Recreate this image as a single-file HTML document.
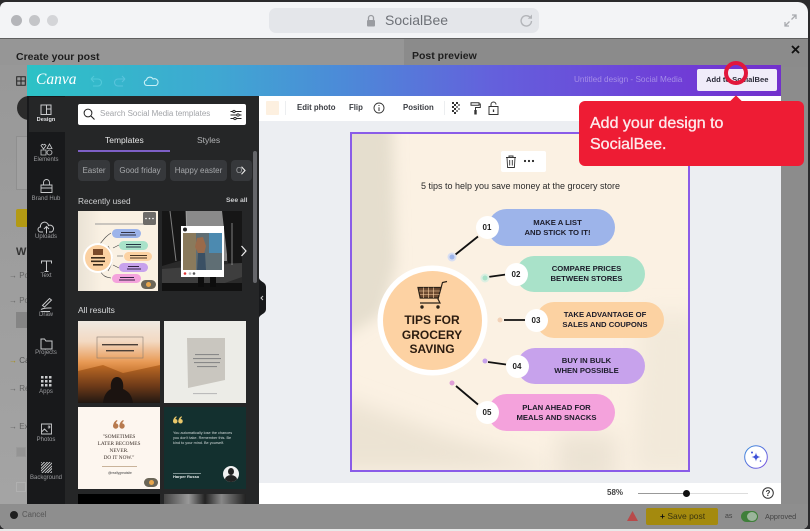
<!DOCTYPE html>
<html><head><meta charset="utf-8"><style>
html,body{margin:0;padding:0}
body{width:810px;height:531px;overflow:hidden;position:relative;background:#2a2a2c;font-family:"Liberation Sans",sans-serif}
div,span,svg{position:absolute;box-sizing:border-box}
.t{white-space:nowrap;line-height:1}
.rl{left:27px;width:38px;text-align:center;font-size:6px;color:#9c9da0;white-space:nowrap;line-height:1}
.chip{top:160px;height:21px;background:#36383b;border-radius:4px;color:#a6a8ab;font-size:8px;line-height:21px;text-align:center;white-space:nowrap;overflow:hidden}
.pill{color:#1c1c2a;font-weight:bold;font-size:7.7px;line-height:10px;text-align:center;white-space:nowrap}
.c{width:23px;height:23px;border-radius:50%;background:#fff;color:#222;font-size:8px;font-weight:bold;line-height:23px;text-align:center}
</style></head><body>
<div style="left:0;top:0;width:810px;height:531px;filter:blur(.3px)">
<!-- browser chrome -->
<div style="left:0;top:2px;width:808px;height:527px;background:#f3f4f6;border-radius:6px 10px 6px 6px;overflow:hidden">
<div style="left:0;top:36px;width:808px;height:491px;background:#969696;border-top:1px solid #5f5f5f"></div>
<div style="left:0;top:63px;width:27px;height:439px;background:linear-gradient(180deg,#989898,#a4a4a4)"></div>
<div style="left:404px;top:37px;width:404px;height:28px;background:#8b8b8b"></div>
<div style="left:781px;top:65px;width:27px;height:437px;background:#8c8c8c"></div>
<div style="left:0;top:502px;width:808px;height:25px;background:#8e8e8e"></div>
</div>
<div style="left:0;top:529px;width:810px;height:2px;background:#e9e9e9"></div>
<div style="left:11px;top:15px;width:11px;height:11px;border-radius:50%;background:#b4b5b9"></div>
<div style="left:29px;top:15px;width:11px;height:11px;border-radius:50%;background:#c4c5c8"></div>
<div style="left:47px;top:15px;width:11px;height:11px;border-radius:50%;background:#d4d5d8"></div>
<div style="left:269px;top:8px;width:270px;height:25px;border-radius:7px;background:#e4e6ea"></div>
<svg style="left:365px;top:14px" width="12" height="13" viewBox="0 0 12 13"><path d="M3.5 6V4a2.5 2.5 0 0 1 5 0v2" fill="none" stroke="#9a9ca1" stroke-width="1.3"/><rect x="2" y="6" width="8" height="6.5" rx="1" fill="#9a9ca1"/></svg>
<div class="t" style="left:385px;top:13px;font-size:14px;color:#6e7177">SocialBee</div>
<svg style="left:519px;top:13px" width="15" height="15" viewBox="0 0 15 15"><path d="M12.5 8a5.2 5.2 0 1 1-1.6-3.9" fill="none" stroke="#b3b5b9" stroke-width="1.4"/><path d="M13 1.5v4.2H8.8z" fill="#b3b5b9"/></svg>
<svg style="left:784px;top:14px" width="13" height="13" viewBox="0 0 13 13"><path d="M7.5 5.5 12 1M8 1h4v4M5.5 7.5 1 12M5 12H1V8" fill="none" stroke="#a9abaf" stroke-width="1.3"/></svg>

<!-- page behind -->
<div class="t" style="left:16px;top:52px;font-size:10.5px;font-weight:bold;color:#1e1e1e">Create your post</div>
<div class="t" style="left:412px;top:51px;font-size:10.5px;font-weight:bold;color:#1e1e1e">Post preview</div>
<svg style="left:791px;top:45px" width="9" height="9" viewBox="0 0 9 9"><path d="M1 1l7 7M8 1l-7 7" stroke="#111" stroke-width="1.8"/></svg>
<svg style="left:16px;top:76px" width="10" height="10" viewBox="0 0 10 10"><path d="M.7.7h8.6v8.6H.7zM5 .7v8.6M.7 5h8.6" fill="none" stroke="#222" stroke-width="1"/></svg>
<div style="left:17px;top:96px;width:24px;height:24px;border-radius:50%;background:#2b2b2b"></div>
<div style="left:16px;top:136px;width:20px;height:54px;border:1px solid #8f8f8f;background:#a0a0a0"></div>
<div style="left:16px;top:209px;width:20px;height:18px;background:#b39a14;border-radius:2px"></div>
<div class="t" style="left:16px;top:247px;font-size:11px;font-weight:bold;color:#333">Wh</div>
<div class="t" style="left:9px;top:272px;font-size:8px;color:#666">→ Po</div>
<div class="t" style="left:9px;top:297px;font-size:8px;color:#666">→ Po</div>
<div style="left:16px;top:312px;width:14px;height:16px;background:#858585"></div>
<div class="t" style="left:9px;top:357px;font-size:8px;color:#555"><span style="position:static;color:#a9911a">→</span> Ca</div>
<div class="t" style="left:9px;top:385px;font-size:8px;color:#666">→ Re</div>
<div class="t" style="left:9px;top:423px;font-size:8px;color:#666">→ Ex</div>
<div style="left:16px;top:447px;width:10px;height:10px;background:#949494;border:1px solid #9a9a9a"></div>
<div style="left:16px;top:482px;width:10px;height:10px;border:1px solid #b0b0b0"></div>
<!-- bottom -->
<div style="left:10px;top:511px;width:8px;height:8px;border-radius:50%;background:#1f1f1f"></div>
<div class="t" style="left:22px;top:511px;font-size:7.8px;color:#555">Cancel</div>
<svg style="left:627px;top:511px" width="11" height="10" viewBox="0 0 11 10"><path d="M5.5 0 11 10H0z" fill="#b84a4a"/></svg>
<div style="left:646px;top:508px;width:72px;height:17px;background:#a48a0e;border-radius:2px"></div>
<div class="t" style="left:660px;top:512px;font-size:8.5px;color:#3a3410"><b style="color:#111">+</b> Save post</div>
<div class="t" style="left:725px;top:513px;font-size:7px;color:#444">as</div>
<div style="left:741px;top:511px;width:17px;height:11px;border-radius:6px;background:#3f7f3a"></div>
<div style="left:747px;top:512px;width:10px;height:9px;border-radius:50%;background:#9bb59b"></div>
<div class="t" style="left:765px;top:513px;font-size:7.3px;color:#444">Approved</div>

<!-- canva -->
<div style="left:27px;top:65px;width:754px;height:31px;background:linear-gradient(90deg,#2cc2c6 0%,#3fa8d2 25%,#4c8ad8 42%,#6460dc 62%,#6f3fd8 85%,#7230cc 100%)"></div>
<div class="t" style="left:36px;top:72px;font-family:'Liberation Serif',serif;font-style:italic;font-size:15.5px;color:#fff">Canva</div>
<svg style="left:88px;top:74px" width="75" height="14" viewBox="0 0 75 14"><path d="M3 5h7a3.5 3.5 0 0 1 0 7H5M3 5l3-3M3 5l3 3" fill="none" stroke="#5fd0e0" stroke-width="1.1" opacity=".7"/><path d="M37 5h-7a3.5 3.5 0 0 0 0 7h5M37 5l-3-3M37 5l-3 3" fill="none" stroke="#6fcbe6" stroke-width="1.1" opacity=".6"/><path d="M59 11.500a2.8 2.8 0 0 1-.5-5.500 3.5 3.5 0 0 1 6.500-1 3.2 3.2 0 0 1 3 6.500z" fill="none" stroke="#c8f0f6" stroke-width="1.1"/></svg>
<div class="t" style="left:574px;top:76px;font-size:8.2px;color:#a58de8">Untitled design - Social Media</div>
<div style="left:697px;top:69px;width:80px;height:22px;background:#f0ecf9;border-radius:2px"></div>
<div class="t" style="left:706px;top:76px;font-size:7.6px;font-weight:bold;color:#2a2a38">Add to SocialBee</div>

<div style="left:27px;top:96px;width:38px;height:408px;background:#18191b"></div>
<div style="left:29px;top:97px;width:36px;height:35px;background:#252627"></div>
<div style="left:65px;top:96px;width:194px;height:408px;background:#252627"></div>
<div style="left:259px;top:96px;width:522px;height:408px;background:#eceef2"></div>
<div style="left:259px;top:96px;width:522px;height:25px;background:#fff"></div>
<div style="left:259px;top:483px;width:522px;height:21px;background:#fff"></div>

<!-- rail icons -->
<svg style="left:27px;top:96px" width="38" height="400" viewBox="0 0 38 400" fill="none" stroke="#c9cacc" stroke-width="1">
<path d="M14 9h10v9.500H14zM19.500 9v9.500M19.500 13H24"/>
<path d="M14 49.500l1.200-1.200 1.300.7 1.300-.7 1.200 1.200-2.500 3.500zM22.500 48l2.500 4.500h-5zM14 54h5v5h-5z" stroke-width=".8"/><circle cx="22.500" cy="56.500" r="2.500" stroke-width=".8"/>
<path d="M14 89h11v7.500H14zM16.500 89v-2.500a3 3 0 0 1 6 0V89M14 92h11" stroke-width=".9"/>
<path d="M16 136h-2.500a2.500 2.500 0 0 1 0-5 4 4 0 0 1 8-1.500 3.200 3.200 0 0 1 3 6.500H22M19.500 130.500v7M17 133l2.500-2.500L22 133"/>
<path d="M14.500 167.500v-2.500h10v2.500M19.500 165v10.500M17.500 175.500h4"/>
<path d="M14 213.500c3-2 7-1.500 10.500-1.500M15.500 209.500l7-7 2 1.500-7 7zM14 215.500h9"/>
<path d="M14 243v10h11v-8h-6l-1.500-2z"/>
<path d="M14.500 328h10v10h-10zM14.500 336l3-3 3 3M21 330.500a1 1 0 1 1 0 1" stroke-width=".9"/>
</svg>
<svg style="left:41px;top:376px" width="11" height="11" viewBox="0 0 11 11" fill="#c9cacc"><rect x="0" y="0" width="2.500" height="2.500"/><rect x="4" y="0" width="2.500" height="2.500"/><rect x="8" y="0" width="2.500" height="2.500"/><rect x="0" y="4" width="2.500" height="2.500"/><rect x="4" y="4" width="2.500" height="2.500"/><rect x="8" y="4" width="2.500" height="2.500"/><rect x="0" y="8" width="2.500" height="2.500"/><rect x="4" y="8" width="2.500" height="2.500"/><rect x="8" y="8" width="2.500" height="2.500"/></svg>
<div style="left:41px;top:462px;width:11px;height:11px;background:repeating-linear-gradient(135deg,#b8b9bb 0 1px,#18191b 1px 2px)"></div>
<div class="rl" style="top:118px;color:#e2e3e5;font-weight:bold;font-size:5.6px">Design</div>
<div class="rl" style="top:157px">Elements</div>
<div class="rl" style="top:196px">Brand Hub</div>
<div class="rl" style="top:234px">Uploads</div>
<div class="rl" style="top:273px">Text</div>
<div class="rl" style="top:312px">Draw</div>
<div class="rl" style="top:350px">Projects</div>
<div class="rl" style="top:389px">Apps</div>
<div class="rl" style="top:437px">Photos</div>
<div class="rl" style="top:475px">Background</div>

<!-- panel -->
<div style="left:78px;top:104px;width:168px;height:21px;background:#fff;border-radius:2px"></div>
<svg style="left:83px;top:108px" width="12" height="12" viewBox="0 0 12 12"><circle cx="5" cy="5" r="3.900" fill="none" stroke="#222" stroke-width="1"/><path d="M8 8l3.500 3.500" stroke="#222" stroke-width="1.100"/></svg>
<div class="t" style="left:100px;top:110px;font-size:8px;color:#a2a4a8">Search Social Media templates</div>
<svg style="left:230px;top:109px" width="12" height="12" viewBox="0 0 12 12" fill="none" stroke="#222" stroke-width=".9"><path d="M.5 2.500h11M.5 6h11M.5 9.500h11"/><circle cx="4" cy="2.500" r="1.200" fill="#fff"/><circle cx="8" cy="6" r="1.200" fill="#fff"/><circle cx="5" cy="9.500" r="1.200" fill="#fff"/></svg>
<div class="t" style="left:105px;top:136px;font-size:8.5px;color:#e6e6e7">Templates</div>
<div class="t" style="left:197px;top:136px;font-size:8.5px;color:#b4b5b7">Styles</div>
<div style="left:78px;top:150px;width:92px;height:1.500px;background:#7d5fc6"></div>
<div class="chip" style="left:78px;width:32px">Easter</div>
<div class="chip" style="left:114px;width:52px">Good friday</div>
<div class="chip" style="left:170px;width:57px">Happy easter</div>
<div class="chip" style="left:231px;width:21px;text-align:left;padding-left:5px">O</div>
<svg style="left:240px;top:166px" width="7" height="9" viewBox="0 0 7 9"><path d="M1.500 .8 5 4.500 1.500 8.200" fill="none" stroke="#eee" stroke-width="1.100"/></svg>
<div style="left:253px;top:151px;width:4px;height:132px;background:#65666a;border-radius:2px"></div>
<div class="t" style="left:78px;top:197px;font-size:8.3px;color:#cfd0d2">Recently used</div>
<div class="t" style="left:226px;top:198px;font-size:6.8px;color:#c9cacc;font-weight:bold">See all</div>

<!-- thumb 1 -->
<svg style="left:78px;top:211px" width="80" height="80" viewBox="0 0 80 80">
<defs><linearGradient id="tb" x1="0" x2="1"><stop offset="0" stop-color="#e9e2d5"/><stop offset=".3" stop-color="#faf1e3"/></linearGradient></defs>
<rect width="80" height="80" fill="url(#tb)"/>
<rect x="17" y="12.500" width="48" height="1" fill="#999"/>
<path d="M22 33C26 28 28 25 33 22M35 37 41 34M39 45h6M35 54l6 3M22 60C26 66 28 66 33 67M30 35C36 45 36 50 30 60" stroke="#444" stroke-width=".6" fill="none"/>
<circle cx="20" cy="47" r="15" fill="#fff"/><circle cx="20" cy="47" r="13" fill="#fbd1a2"/>
<rect x="15" y="38" width="10" height="6" fill="#7a4a2a"/><rect x="13" y="46" width="14" height="1.600" fill="#3a2a1a"/><rect x="13" y="49.500" width="14" height="1.600" fill="#3a2a1a"/><rect x="15" y="53" width="10" height="1.600" fill="#3a2a1a"/>
<rect x="34" y="18" width="29" height="9" rx="4.500" fill="#9db4ea"/><rect x="43" y="21" width="14" height="1" fill="#334"/><rect x="42" y="23.500" width="16" height="1" fill="#334"/>
<rect x="41" y="30" width="29" height="9" rx="4.500" fill="#a9e2c9"/><rect x="48" y="33" width="15" height="1" fill="#234"/><rect x="48" y="35.500" width="15" height="1" fill="#234"/>
<rect x="46" y="41" width="28" height="9" rx="4.500" fill="#fcd2a2"/><rect x="52" y="44" width="17" height="1" fill="#432"/><rect x="52" y="46.500" width="17" height="1" fill="#432"/>
<rect x="41" y="52" width="29" height="9" rx="4.500" fill="#c7a2ec"/><rect x="50" y="55" width="11" height="1" fill="#324"/><rect x="49" y="57.500" width="14" height="1" fill="#324"/>
<rect x="34" y="63" width="29" height="9" rx="4.500" fill="#f4a2dc"/><rect x="42" y="66" width="14" height="1" fill="#324"/><rect x="41" y="68.500" width="16" height="1" fill="#324"/>
<rect x="65" y="1" width="13" height="13" rx="1.500" fill="#6d6b68"/><circle cx="68" cy="7.500" r=".8" fill="#fff"/><circle cx="71.500" cy="7.500" r=".8" fill="#fff"/><circle cx="75" cy="7.500" r=".8" fill="#fff"/>
<rect x="63" y="69" width="15" height="9" rx="4.500" fill="#6b6658"/><circle cx="70.500" cy="73.500" r="2.500" fill="#e8a64c"/>
</svg>
<!-- thumb 2 -->
<svg style="left:162px;top:211px" width="80" height="80" viewBox="0 0 80 80">
<rect width="80" height="80" fill="#2a2a2a"/>
<path d="M20 0h45v50H20z" fill="#8a8a8a"/>
<path d="M0 0h24v48L0 55zM60 0h20v52H66z" fill="#161616"/>
<path d="M0 58 80 52v14L40 80H0z" fill="#3e3e3e"/>
<path d="M0 72h80v8H0z" fill="#111"/>
<path d="M24 0l2 50M8 0l6 50M70 12v42" stroke="#aaa" stroke-width="1" opacity=".7"/>
<rect x="19" y="15" width="43" height="51" fill="#fff"/>
<rect x="21" y="22" width="39" height="37" fill="#5f6e74"/><rect x="21" y="22" width="13" height="37" fill="#8a7a5c"/><rect x="47" y="22" width="13" height="20" fill="#4c8ab0"/>
<path d="M35 27l6-1 3 9-2 8 1 16h-8l1-17-3-6z" fill="#9a6a4a"/><path d="M36 42h7l1 17h-9z" fill="#3a5064"/>
<circle cx="23" cy="18.500" r="2" fill="#222"/><circle cx="23" cy="62.500" r="1.300" fill="#d33"/><circle cx="28" cy="62.500" r="1.300" fill="#bbb"/><circle cx="32" cy="62.500" r="1.300" fill="#555"/>
<rect x="36" y="66" width="6" height="10" fill="#0d0d0d"/><rect x="48" y="66" width="6" height="10" fill="#0d0d0d"/>
</svg>
<svg style="left:240px;top:245px" width="8" height="12" viewBox="0 0 8 12"><path d="M1.500 1 6 6 1.500 11" fill="none" stroke="#eee" stroke-width="1.200"/></svg>
<svg style="left:259px;top:278px" width="9" height="40" viewBox="0 0 9 40"><path d="M0 0c1 4 7 4 7 9v22c0 5-6 5-7 9z" fill="#18191b"/><path d="M4 18l-2 2 2 2" stroke="#ccc" fill="none"/></svg>

<div class="t" style="left:78px;top:306px;font-size:8.5px;color:#d8d9db">All results</div>
<!-- result 1 -->
<svg style="left:78px;top:321px" width="82" height="82" viewBox="0 0 82 82">
<defs><linearGradient id="s" x1="0" y1="0" x2="0" y2="1"><stop offset="0" stop-color="#efe9e1"/><stop offset=".25" stop-color="#f3d9c2"/><stop offset=".5" stop-color="#e89a55"/><stop offset=".7" stop-color="#b9651f"/></linearGradient>
<linearGradient id="s2" x1="0" y1="0" x2="0" y2="1"><stop offset="0" stop-color="#bd6a24"/><stop offset=".55" stop-color="#6e3a18"/><stop offset="1" stop-color="#221812"/></linearGradient></defs>
<rect width="82" height="82" fill="url(#s)"/>
<path d="M0 50 25 44l20 8 37-8v38H0z" fill="url(#s2)"/>
<path d="M25 82c1-10 6-13 8-14-1-6 1-12 6-12s7 6 6 12c5 2 9 6 10 14z" fill="#1b1310"/>
<rect x="19" y="16" width="46" height="21" fill="none" stroke="#8a7d72" stroke-width=".6"/>
<rect x="24" y="23" width="36" height="1.400" fill="#4a3f38"/><rect x="28" y="29" width="28" height="1.400" fill="#4a3f38"/>
</svg>
<svg style="left:164px;top:321px" width="82" height="82" viewBox="0 0 82 82"><rect width="82" height="82" fill="#ecece7"/><path d="M23 17h38v42l-37 8z" fill="#c9c6bf"/><rect x="31" y="33" width="24" height="1.100" fill="#888"/><rect x="29" y="37" width="28" height="1.100" fill="#888"/><rect x="30" y="41" width="26" height="1.100" fill="#888"/><rect x="33" y="45" width="20" height="1.100" fill="#888"/><rect x="29" y="72" width="24" height="1.100" fill="#bbb"/></svg>
<!-- result 3 -->
<div style="left:78px;top:407px;width:82px;height:82px;background:#fdf6ef"></div>
<svg style="left:113px;top:420px" width="12" height="9" viewBox="0 0 12 9" fill="#b87a4e"><circle cx="2.700" cy="6" r="2.700"/><circle cx="9" cy="6" r="2.700"/><path d="M.2 6C.2 3 2 .8 4 0l.5 1C3 2 2.500 3.500 3 5zM6.500 6C6.500 3 8.300.8 10.300 0l.5 1C9.300 2 8.800 3.500 9.300 5z"/></svg>
<div style="left:78px;top:434px;width:82px;text-align:center;font-family:'Liberation Serif',serif;font-size:5.3px;line-height:7px;color:#3a2e28;white-space:nowrap">"SOMETIMES<br>LATER BECOMES<br>NEVER.<br>DO IT NOW."</div>
<div style="left:102px;top:465.500px;width:35px;height:1px;background:#c9b39a"></div>
<div class="t" style="left:108px;top:472px;font-size:3.3px;color:#444">@reallygreatsite</div>
<div style="left:144px;top:478px;width:14px;height:9px;border-radius:4.500px;background:#6b6658"></div>
<div style="left:149px;top:480px;width:5px;height:5px;border-radius:50%;background:#e8a64c"></div>
<!-- result 4 -->
<div style="left:164px;top:407px;width:82px;height:82px;background:#13302f"></div>
<svg style="left:173px;top:416px" width="10" height="8" viewBox="0 0 12 9" fill="#e9c76a"><circle cx="2.700" cy="6" r="2.700"/><circle cx="9" cy="6" r="2.700"/><path d="M.2 6C.2 3 2 .8 4 0l.5 1C3 2 2.500 3.500 3 5zM6.500 6C6.500 3 8.300.8 10.300 0l.5 1C9.300 2 8.800 3.500 9.300 5z"/></svg>
<div style="left:173px;top:431px;width:68px;font-size:3.8px;line-height:4.800px;color:#d5dcdc;white-space:nowrap">You automatically lose the chances<br>you don't take. Remember this. Be<br>kind to your mind. Be yourself.</div>
<div style="left:173px;top:473px;width:28px;height:.8px;background:#7a8f8e"></div>
<div class="t" style="left:173px;top:475px;font-size:4px;font-weight:bold;color:#e6ecec">Harper Russo</div>
<div style="left:223px;top:466px;width:16px;height:16px;border-radius:50%;background:#f2f2f2;overflow:hidden"><div style="left:5px;top:2px;width:6px;height:7px;border-radius:50%;background:#222"></div><div style="left:2px;top:9px;width:12px;height:9px;border-radius:50%;background:#222"></div></div>
<div style="left:78px;top:494px;width:82px;height:10px;background:#000"></div>
<div style="left:164px;top:494px;width:82px;height:10px;background:linear-gradient(90deg,#444,#999 30%,#222 50%,#888 70%,#222)"></div>

<!-- toolbar -->
<div style="left:266px;top:101px;width:13px;height:14px;background:#fdf0e0;border-radius:1px"></div>
<div style="left:285px;top:101px;width:1px;height:14px;background:#eceef0"></div>
<div class="t" style="left:297px;top:104px;font-size:7.8px;font-weight:bold;color:#3a3c42">Edit photo</div>
<div class="t" style="left:349px;top:104px;font-size:7.8px;font-weight:bold;color:#3a3c42">Flip</div>
<svg style="left:373px;top:102px" width="12" height="12" viewBox="0 0 12 12"><circle cx="6" cy="6" r="5" fill="none" stroke="#333" stroke-width=".9"/><path d="M6 5.300V9M6 3v1" stroke="#333" stroke-width="1"/></svg>
<div class="t" style="left:403px;top:104px;font-size:7.8px;font-weight:bold;color:#3a3c42">Position</div>
<div style="left:444px;top:101px;width:1px;height:14px;background:#eceef0"></div>
<svg style="left:451px;top:102px" width="11" height="12" viewBox="0 0 11 12" fill="#333"><rect x="1" y="0" width="2" height="2"/><rect x="5" y="0" width="2" height="2"/><rect x="3" y="2" width="2" height="2"/><rect x="7" y="2" width="2" height="2" opacity=".6"/><rect x="1" y="4" width="2" height="2"/><rect x="5" y="4" width="2" height="2" opacity=".6"/><rect x="3" y="6" width="2" height="2"/><rect x="7" y="6" width="2" height="2" opacity=".5"/><rect x="1" y="8" width="2" height="2"/><rect x="5" y="8" width="2" height="2" opacity=".6"/><rect x="3" y="10" width="2" height="2"/></svg>
<svg style="left:470px;top:102px" width="11" height="13" viewBox="0 0 11 13" fill="none" stroke="#333" stroke-width="1"><path d="M1 .8h8v2.500H1zM9 2h1.300v3.500H5.500V8"/><rect x="4.300" y="8" width="2.400" height="4.500" fill="#333" stroke="none"/></svg>
<svg style="left:488px;top:101px" width="11" height="14" viewBox="0 0 11 14" fill="none" stroke="#333" stroke-width="1"><path d="M3 5.500V3.500a2.500 2.500 0 0 1 5 0"/><rect x="1" y="5.500" width="9" height="8"/><path d="M5.500 8.500v2.500" stroke-width="1.300"/></svg>

<!-- canvas -->
<div style="left:350px;top:132px;width:340px;height:340px;border:2px solid #8a5ce8;background:#fbf1e3;overflow:hidden">
<svg style="left:0;top:0" width="336" height="336" viewBox="0 0 336 336">
<defs><filter id="bl" x="-30%" y="-30%" width="160%" height="160%"><feGaussianBlur stdDeviation="7"/></filter>
<filter id="bl2" x="-30%" y="-30%" width="160%" height="160%"><feGaussianBlur stdDeviation="11"/></filter></defs>
<path d="M-20-20H40L44 130 30 180-20 210z" fill="#e5dece" filter="url(#bl)"/>
<path d="M-20 260 90 300 210 336H-20z" fill="#ece3d3" filter="url(#bl2)"/>
<path d="M205 300h60v50h-60z" fill="#ece3d4" filter="url(#bl2)"/>
<path d="M290 180h60v160h-70z" fill="#f2e9da" filter="url(#bl2)"/>
</svg>
</div>
<div style="left:501px;top:151px;width:45px;height:21px;background:#fff;border-radius:2px"></div>
<svg style="left:505px;top:155px" width="12" height="13" viewBox="0 0 12 13" fill="none" stroke="#333" stroke-width=".9"><path d="M1 2.500h10M4 2.500V1h4v1.500M2 2.500l.6 10h6.800l.6-10M4.700 5v5.500M7.300 5v5.500"/></svg>
<svg style="left:523px;top:159px" width="12" height="4" viewBox="0 0 12 4" fill="#222"><circle cx="2" cy="2" r="1.100"/><circle cx="6" cy="2" r="1.100"/><circle cx="10" cy="2" r="1.100"/></svg>
<div class="t" style="left:351px;top:182px;width:339px;text-align:center;font-size:9px;color:#2a2a2a">5 tips to help you save money at the grocery store</div>

<svg style="left:350px;top:132px" width="340" height="340" viewBox="350 132 340 340">
<g fill="none" stroke="#111" stroke-width="1.800">
<path d="M455.500 254.500 478 236.500M488 277 506 274.500M504 320h21M488 362 506 364.500M456 386 478 404.500"/></g>
<circle cx="452" cy="257" r="4.500" fill="#d7def3"/><circle cx="452" cy="257" r="2.500" fill="#9db4ea"/>
<circle cx="485" cy="278" r="4.500" fill="#dcefe2"/><circle cx="485" cy="278" r="2.500" fill="#a9e2c9"/>
<circle cx="500" cy="320" r="2.500" fill="#f2d2b8"/>
<circle cx="485" cy="361" r="2.500" fill="#c7a2ec"/>
<circle cx="452" cy="383" r="2.500" fill="#e0a0d8"/>
<circle cx="432.500" cy="320.500" r="55" fill="#fff"/>
<circle cx="432.500" cy="320.500" r="49.500" fill="#fdd2a3"/>
<g fill="none" stroke="#2c2218" stroke-width="1.200">
<path d="M447 281.500 442.500 282.500 438 299l2 4h-20"/>
<path d="M418 287.500h23l-2.800 10.500h-18z" fill="#6c4a30"/>
<path d="M423.500 287.500v10.500M428.500 287.500v10.500M433.500 287.500v10.500M419 291h21M420 294.500h19.500" stroke="#fdd2a3" stroke-width=".6"/>
</g>
<circle cx="422" cy="307" r="1.700" fill="#2c2218"/><circle cx="438" cy="307" r="1.700" fill="#2c2218"/>
</svg>
<div style="left:382px;top:313px;width:100px;text-align:center;font-size:12px;font-weight:bold;line-height:14.500px;color:#2c1c10">TIPS FOR<br>GROCERY<br>SAVING</div>

<div class="pill" style="left:488px;top:209px;width:127px;height:37px;background:#9db4ea;border-radius:19px;padding:9px 0 0 12px">MAKE A LIST<br>AND STICK TO IT!</div>
<div class="pill" style="left:516px;top:256px;width:129px;height:36px;background:#a9e2c9;border-radius:18px;padding:8px 0 0 12px">COMPARE PRICES<br>BETWEEN STORES</div>
<div class="pill" style="left:536px;top:302px;width:128px;height:36px;background:#fcd2a2;border-radius:18px;padding:8px 0 0 10px">TAKE ADVANTAGE OF<br>SALES AND COUPONS</div>
<div class="pill" style="left:517px;top:348px;width:128px;height:36px;background:#c7a2ec;border-radius:18px;padding:8px 0 0 11px">BUY IN BULK<br>WHEN POSSIBLE</div>
<div class="pill" style="left:488px;top:394px;width:127px;height:37px;background:#f4a2dc;border-radius:19px;padding:9px 0 0 10px">PLAN AHEAD FOR<br>MEALS AND SNACKS</div>
<div class="c" style="left:475.500px;top:215.500px">01</div>
<div class="c" style="left:504.500px;top:262.500px">02</div>
<div class="c" style="left:524.500px;top:308.500px">03</div>
<div class="c" style="left:505.500px;top:354.500px">04</div>
<div class="c" style="left:475.500px;top:400.500px">05</div>

<!-- magic -->
<svg style="left:744px;top:445px" width="24" height="24" viewBox="0 0 24 24"><defs><linearGradient id="m" x1="0" y1="0" x2="1" y2="1"><stop offset="0" stop-color="#3a8fdc"/><stop offset="1" stop-color="#7a50e0"/></linearGradient></defs><circle cx="12" cy="12" r="11.300" fill="#fff" stroke="url(#m)" stroke-width="1"/><path d="M12 7.500c.5 3 1.500 4 4.500 4.500-3 .5-4 1.500-4.500 4.500-.5-3-1.500-4-4.500-4.500 3-.5 4-1.500 4.500-4.500z" fill="#3f52d8"/><circle cx="8" cy="7.500" r="1" fill="#3f52d8"/><circle cx="16.500" cy="16" r=".8" fill="#3f52d8"/></svg>
<!-- zoom bar -->
<div class="t" style="left:607px;top:489px;font-size:8px;font-weight:bold;color:#444">58%</div>
<div style="left:638px;top:493px;width:48px;height:1px;background:#999"></div>
<div style="left:686px;top:493px;width:62px;height:1px;background:#ddd"></div>
<div style="left:683px;top:490px;width:7px;height:7px;border-radius:50%;background:#111"></div>
<svg style="left:762px;top:487px" width="12" height="12" viewBox="0 0 12 12"><circle cx="6" cy="6" r="5.300" fill="none" stroke="#333"/><text x="6" y="8.800" text-anchor="middle" font-size="8" font-weight="bold" fill="#333" font-family="Liberation Sans">?</text></svg>

<!-- tooltip -->
<div style="left:732px;top:97px;width:8px;height:8px;background:#ee1c34;transform:rotate(45deg)"></div>
<div style="left:579px;top:101px;width:225px;height:65px;background:#ee1c34;border-radius:6px"></div>
<div style="left:590px;top:112.500px;font-size:16px;line-height:21px;color:#fde8ea;white-space:nowrap;-webkit-text-stroke:.35px #fde8ea">Add your design to<br>SocialBee.</div>
<div style="left:724px;top:61px;width:24px;height:24px;border-radius:50%;border:4px solid #e2173c"></div>
</div>
</body></html>
